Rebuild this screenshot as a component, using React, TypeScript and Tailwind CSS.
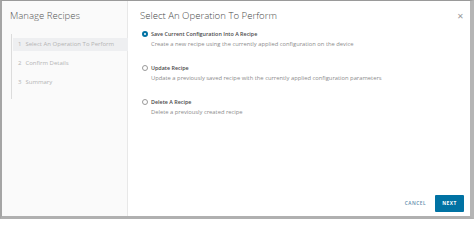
import React, { useState } from "react";

const options = [
  {
    id: "save",
    label: "Save Current Configuration Into A Recipe",
    desc: "Create a new recipe using the currently applied configuration on the device",
  },
  {
    id: "update",
    label: "Update Recipe",
    desc: "Update a previously saved recipe with the currently applied configuration parameters",
  },
  {
    id: "delete",
    label: "Delete A Recipe",
    desc: "Delete a previously created recipe",
  },
];

const steps = ["Select An Operation To Perform", "Confirm Details", "Summary"];

const App: React.FC = () => {
  const [selected, setSelected] = useState("save");

  return (
    <div
      className="w-[474px] h-[219px] bg-white overflow-hidden"
      style={{ fontFamily: '"Open Sans", "Liberation Sans", sans-serif' }}
    >
      <div className="w-full h-full flex border-t border-l-2 border-r-[4px] border-b-[3px] border-t-[#9a9a9a] border-l-[#a5a5a5] border-r-[#b5b5b5] border-b-[#b0b0b0]">
        {/* sidebar */}
        <div className="w-[126px] h-full bg-[#fafafa] border-r border-[#e8e8e8] flex flex-col">
          <h2 className="pl-2 pt-[9px] h-[33px] text-[9.6px] font-light text-[#565656] leading-[12px]">
            Manage Recipes
          </h2>
          <div className="ml-[9px] border-l border-[#dcdcdc] flex flex-col pt-[4px] pb-[10px] w-[117px]">
            {steps.map((s, i) => (
              <div
                key={s}
                className={`h-[13px] flex items-center pl-[5px] text-[6px] text-[#b4b4b4] ${
                  i === 0 ? "bg-[#eeeff1] ml-[1px]" : "ml-[1px] mt-[6px]"
                }`}
              >
                <span className="mr-[4px]">{i + 1}</span>
                {s}
              </div>
            ))}
          </div>
        </div>

        {/* main */}
        <div className="flex-1 h-full flex flex-col">
          <div className="flex items-start justify-between pl-[12px] pr-[6px] pt-[9px] h-[28px]">
            <h1 className="text-[9.6px] font-light text-[#4a4a4a] leading-[12px]">
              Select An Operation To Perform
            </h1>
            <button className="text-[#9a9a9a] text-[8px] leading-[8px] mt-[2px]">
              ✕
            </button>
          </div>

          <div className="flex flex-col gap-[15px] pl-[14px]">
            {options.map((o) => (
              <label
                key={o.id}
                className="flex flex-col cursor-pointer"
                onClick={() => setSelected(o.id)}
              >
                <div className="flex items-center h-[10px]">
                  <span
                    className={`w-[6px] h-[6px] rounded-full mr-[3px] ${
                      selected === o.id
                        ? "border-[2px] border-[#0072a3] bg-white"
                        : "border border-[#9a9a9a] bg-white"
                    }`}
                  />
                  <span className="text-[5.4px] font-semibold text-[#4a4a4a]">
                    {o.label}
                  </span>
                </div>
                <span className="pl-[9px] mt-[1px] text-[5.8px] text-[#8c8c8c] leading-[8px]">
                  {o.desc}
                </span>
              </label>
            ))}
          </div>

          <div className="mt-auto flex items-center justify-end gap-[9px] pr-[6px] pb-[4px]">
            <button className="text-[4.8px] font-semibold tracking-[0.5px] text-[#5d8bab]">
              CANCEL
            </button>
            <button className="w-[29px] h-[17px] bg-[#0072a3] text-white text-[4.8px] font-bold tracking-[0.5px] rounded-[1px]">
              NEXT
            </button>
          </div>
        </div>
      </div>
    </div>
  );
};

export default App;
